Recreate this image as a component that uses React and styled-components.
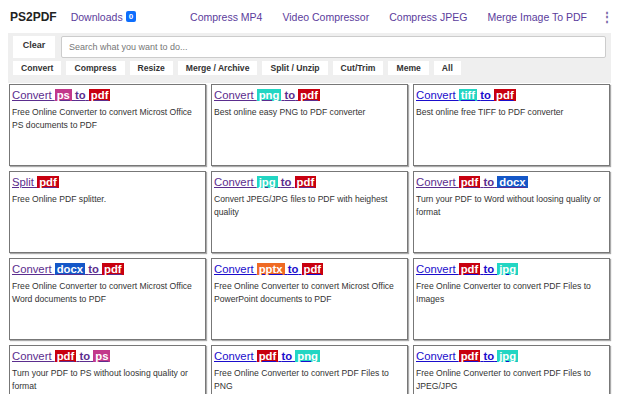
import React from "react";
import styled, { createGlobalStyle } from "styled-components";

const GlobalStyle = createGlobalStyle`
  body {
    margin: 0;
    background: #fff;
    font-family: "Liberation Sans", Arial, sans-serif;
  }
`;

const Page = styled.div`
  width: 618px;
  height: 394px;
  overflow: hidden;
`;

const Nav = styled.div`
  height: 33px;
  display: flex;
  align-items: center;
  padding: 0 5px 0 10px;
  box-sizing: border-box;
  font-size: 10.5px;
  white-space: nowrap;
`;

const Brand = styled.div`
  font-weight: bold;
  font-size: 12px;
  color: #222;
  margin-right: 14px;
`;

const NavLinks = styled.div`
  margin-left: auto;
  display: flex;
  align-items: center;
  gap: 20px;
`;

const NavLink = styled.a`
  color: #5b3c9c;
  text-decoration: none;
  display: flex;
  align-items: center;
`;

const Count = styled.span`
  background: #0d6efd;
  color: #fff;
  font-size: 8px;
  font-weight: bold;
  border-radius: 2px;
  padding: 1px 3px;
  margin-left: 3px;
`;

const Kebab = styled.div`
  margin-left: 14px;
  color: #7a6aa8;
  font-size: 12px;
  font-weight: bold;
`;

const Panel = styled.div`
  margin: 0 7px 0 8px;
  background: #efefef;
  padding: 3px 5px 8px 5px;
  display: flex;
  flex-direction: column;
  gap: 3px;
`;

const SearchRow = styled.div`
  display: flex;
  gap: 6px;
`;

const ClearBtn = styled.div`
  width: 42px;
  height: 22px;
  background: #fff;
  font-size: 9px;
  font-weight: bold;
  color: #333;
  display: flex;
  justify-content: center;
  padding-top: 4px;
  box-sizing: border-box;
`;

const Search = styled.div`
  flex: 1;
  height: 22px;
  background: #fff;
  border: 1px solid #ccc;
  border-radius: 2px;
  box-sizing: border-box;
  font-size: 9px;
  color: #777;
  display: flex;
  align-items: center;
  padding-left: 7px;
`;

const FilterRow = styled.div`
  display: flex;
  gap: 5px;
`;

const Filter = styled.div`
  height: 14px;
  background: #fff;
  font-size: 8.6px;
  font-weight: bold;
  color: #333;
  display: flex;
  align-items: center;
  padding: 0 8px;
`;

const Grid = styled.div`
  display: grid;
  grid-template-columns: repeat(3, 197px);
  grid-auto-rows: 82px;
  column-gap: 5px;
  row-gap: 5px;
  padding: 1px 0 0 9px;
`;

const Card = styled.div`
  border: 1px solid #777;
  box-shadow: 1px 1px 1px #aaa;
  padding: 0 2px;
  box-sizing: border-box;
  background: #fff;
`;

const Title = styled.a`
  font-size: 11.3px;
  color: ${(p) => (p.$visited ? "#5b2d8e" : "#1a0dcc")};
  text-decoration: underline;
  line-height: 13px;
  display: inline-block;
`;

const Ext = styled.span`
  background: ${(p) => p.$bg};
  color: #fff;
  font-weight: bold;
  padding: 0 2px;
`;

const To = styled.span`
  font-weight: bold;
`;

const Desc = styled.div`
  font-size: 8.6px;
  color: #333;
  line-height: 13px;
  margin-top: 3px;
`;

const colors = {
  ps: "#c2388a",
  png: "#22d6c3",
  tiff: "#22d6c3",
  jpg: "#22d6c3",
  pdf: "#c8000f",
  docx: "#1457c8",
  pptx: "#ef6a24",
};

const cards = [
  { from: "ps", to: "pdf", v: true, d: "Free Online Converter to convert Microst Office PS documents to PDF" },
  { from: "png", to: "pdf", v: true, d: "Best online easy PNG to PDF converter" },
  { from: "tiff", to: "pdf", v: false, d: "Best online free TIFF to PDF converter" },
  { split: true, v: true, d: "Free Online PDF splitter." },
  { from: "jpg", to: "pdf", v: true, d: "Convert JPEG/JPG files to PDF with heighest quality" },
  { from: "pdf", to: "docx", v: true, d: "Turn your PDF to Word without loosing quality or format" },
  { from: "docx", to: "pdf", v: true, d: "Free Online Converter to convert Microst Office Word documents to PDF" },
  { from: "pptx", to: "pdf", v: false, d: "Free Online Converter to convert Microst Office PowerPoint documents to PDF" },
  { from: "pdf", to: "jpg", v: false, d: "Free Online Converter to convert PDF Files to Images" },
  { from: "pdf", to: "ps", v: true, d: "Turn your PDF to PS without loosing quality or format" },
  { from: "pdf", to: "png", v: false, d: "Free Online Converter to convert PDF Files to PNG" },
  { from: "pdf", to: "jpg", v: false, d: "Free Online Converter to convert PDF Files to JPEG/JPG" },
];

const filters = ["Convert", "Compress", "Resize", "Merge / Archive", "Split / Unzip", "Cut/Trim", "Meme", "All"];

export default function App() {
  return (
    <Page>
      <GlobalStyle />
      <Nav>
        <Brand>PS2PDF</Brand>
        <NavLink>
          Downloads <Count>0</Count>
        </NavLink>
        <NavLinks>
          <NavLink>Compress MP4</NavLink>
          <NavLink>Video Compressor</NavLink>
          <NavLink>Compress JPEG</NavLink>
          <NavLink>Merge Image To PDF</NavLink>
        </NavLinks>
        <Kebab>⋮</Kebab>
      </Nav>
      <Panel>
        <SearchRow>
          <ClearBtn>Clear</ClearBtn>
          <Search>Search what you want to do...</Search>
        </SearchRow>
        <FilterRow>
          {filters.map((f) => (
            <Filter key={f}>{f}</Filter>
          ))}
        </FilterRow>
      </Panel>
      <Grid>
        {cards.map((c, i) => (
          <Card key={i}>
            {c.split ? (
              <Title $visited={c.v}>
                Split <Ext $bg={colors.pdf}>pdf</Ext>
              </Title>
            ) : (
              <Title $visited={c.v}>
                Convert <Ext $bg={colors[c.from]}>{c.from}</Ext> <To>to</To>{" "}
                <Ext $bg={colors[c.to]}>{c.to}</Ext>
              </Title>
            )}
            <Desc>{c.d}</Desc>
          </Card>
        ))}
      </Grid>
    </Page>
  );
}
